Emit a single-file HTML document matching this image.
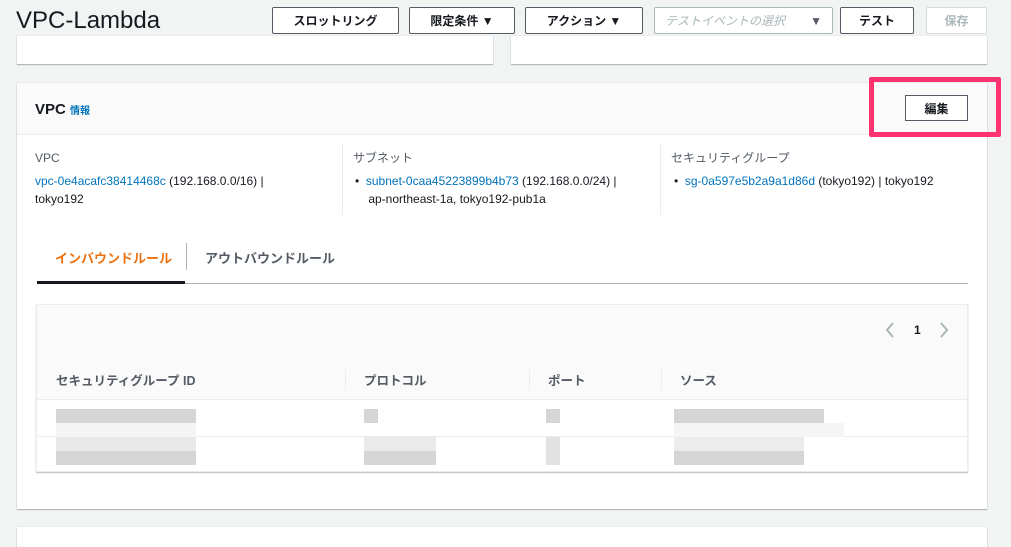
<!DOCTYPE html>
<html><head><meta charset="utf-8"><style>
*{box-sizing:border-box;margin:0;padding:0}
body{width:1011px;height:537px;overflow:hidden;background:#f2f3f3;font-family:"Liberation Sans","Noto Sans CJK JP",sans-serif;color:#16191f;position:relative;font-size:12px}
.a{position:absolute}
.btn{position:absolute;top:7px;height:27px;border:1px solid #545b64;background:#fff;font-weight:bold;font-size:12px;display:flex;align-items:center;justify-content:center;color:#16191f;border-radius:2px}
.card{position:absolute;background:#fff;box-shadow:0 1px 1px rgba(0,26,51,.3),0 0 0 1px #eaeded}
.lnk{color:#0073bb}
.blur{position:absolute;background:#d5d5d5}
</style></head><body>
<div class="a" style="left:16px;top:5px;font-size:24px;line-height:32px">VPC-Lambda</div>
<div class="btn" style="left:272px;width:127px">スロットリング</div>
<div class="btn" style="left:409px;width:106px">限定条件 ▼</div>
<div class="btn" style="left:525px;width:118px">アクション ▼</div>
<div class="btn" style="left:654px;width:179px;border-color:#aab7b8;font-weight:normal;font-style:italic;color:#aab7b8;justify-content:space-between;padding:0 10px"><span>テストイベントの選択</span><span style="color:#545b64;font-style:normal">▼</span></div>
<div class="btn" style="left:840px;width:74px">テスト</div>
<div class="btn" style="left:926px;width:61px;border-color:#d5dbdb;color:#aab7b8">保存</div>
<div class="card" style="left:17px;top:36px;width:476px;height:28px"></div>
<div class="card" style="left:511px;top:36px;width:476px;height:28px"></div>
<div class="card" style="left:17px;top:83px;width:970px;height:426px"></div>
<div class="a" style="left:17px;top:83px;width:970px;height:52px;background:#fafafa;border-bottom:1px solid #eaeded"></div>
<div class="a" style="left:35px;top:101px;font-size:15px;font-weight:bold">VPC <span class="lnk" style="font-size:10px">情報</span></div>
<div class="a" style="left:905px;top:95px;width:63px;height:26px;border:1px solid #545b64;background:#fff;font-weight:bold;display:flex;align-items:center;justify-content:center">編集</div>
<div class="a" style="left:869px;top:77px;width:132px;height:60px;border:5px solid #ff3370;border-radius:2px"></div>
<div class="a" style="left:342px;top:143px;width:1px;height:72px;background:#eaeded"></div>
<div class="a" style="left:660px;top:143px;width:1px;height:72px;background:#eaeded"></div>
<div class="a" style="left:35px;top:149px;line-height:18px;color:#545b64">VPC</div>
<div class="a" style="left:35px;top:172px;line-height:18px;width:300px"><span class="lnk">vpc-0e4acafc38414468c</span> (192.168.0.0/16) |<br>tokyo192</div>
<div class="a" style="left:353px;top:149px;line-height:18px;color:#545b64">サブネット</div>
<div class="a" style="left:355px;top:172px;line-height:18px">• &nbsp;<span class="lnk">subnet-0caa45223899b4b73</span> (192.168.0.0/24) |<br>&nbsp;&nbsp;&nbsp;&nbsp;ap-northeast-1a, tokyo192-pub1a</div>
<div class="a" style="left:671px;top:149px;line-height:18px;color:#545b64">セキュリティグループ</div>
<div class="a" style="left:674px;top:172px;line-height:18px">• &nbsp;<span class="lnk">sg-0a597e5b2a9a1d86d</span> (tokyo192) | tokyo192</div>
<div class="a" style="left:55px;top:248px;font-size:13px;font-weight:bold;color:#ec7211">インバウンドルール</div>
<div class="a" style="left:186px;top:243px;width:1px;height:27px;background:#aab7b8"></div>
<div class="a" style="left:205px;top:248px;font-size:13px;font-weight:bold;color:#545b64">アウトバウンドルール</div>
<div class="a" style="left:37px;top:283px;width:931px;height:1px;background:#aab7b8"></div>
<div class="a" style="left:37px;top:281px;width:148px;height:3px;background:#16191f"></div>
<div class="a" style="left:36px;top:304px;width:932px;height:168px;border:1px solid #eaeded;background:#fff;box-shadow:0 1px 1px rgba(0,26,51,.3)"></div>
<div class="a" style="left:37px;top:305px;width:930px;height:95px;background:#fafafa;border-bottom:1px solid #eaeded"></div>
<svg class="a" style="left:884px;top:321px" width="12" height="18"><path d="M9 2 L3 9 L9 16" fill="none" stroke="#aab7b8" stroke-width="2"/></svg>
<div class="a" style="left:914px;top:323px;font-weight:bold">1</div>
<svg class="a" style="left:938px;top:321px" width="12" height="18"><path d="M3 2 L9 9 L3 16" fill="none" stroke="#aab7b8" stroke-width="2"/></svg>
<div class="a" style="left:56px;top:370px;font-weight:bold;color:#545b64;font-size:12.5px">セキュリティグループ ID</div>
<div class="a" style="left:345px;top:369px;width:1px;height:21px;background:#eaeded"></div>
<div class="a" style="left:364px;top:370px;font-weight:bold;color:#545b64;font-size:12.5px">プロトコル</div>
<div class="a" style="left:529px;top:369px;width:1px;height:21px;background:#eaeded"></div>
<div class="a" style="left:548px;top:370px;font-weight:bold;color:#545b64;font-size:12.5px">ポート</div>
<div class="a" style="left:661px;top:369px;width:1px;height:21px;background:#eaeded"></div>
<div class="a" style="left:680px;top:370px;font-weight:bold;color:#545b64;font-size:12.5px">ソース</div>
<div class="a" style="left:37px;top:436px;width:930px;height:1px;background:#eaeded"></div>
<div class="blur" style="left:56px;top:409px;width:140px;height:14px"></div>
<div class="blur" style="left:56px;top:423px;width:140px;height:14px;background:#f4f4f4"></div>
<div class="blur" style="left:56px;top:437px;width:140px;height:14px;background:#e8e8e8"></div>
<div class="blur" style="left:56px;top:451px;width:140px;height:14px"></div>
<div class="blur" style="left:364px;top:409px;width:14px;height:14px"></div>
<div class="blur" style="left:364px;top:437px;width:72px;height:14px;background:#eaeaea"></div>
<div class="blur" style="left:364px;top:451px;width:72px;height:14px"></div>
<div class="blur" style="left:546px;top:409px;width:14px;height:14px"></div>
<div class="blur" style="left:546px;top:437px;width:14px;height:28px;background:#e2e2e2"></div>
<div class="blur" style="left:674px;top:409px;width:150px;height:14px"></div>
<div class="blur" style="left:674px;top:423px;width:170px;height:14px;background:#f5f5f5"></div>
<div class="blur" style="left:674px;top:437px;width:130px;height:14px;background:#ececec"></div>
<div class="blur" style="left:674px;top:451px;width:130px;height:14px"></div>
<div class="card" style="left:17px;top:527px;width:970px;height:20px"></div>
</body></html>
